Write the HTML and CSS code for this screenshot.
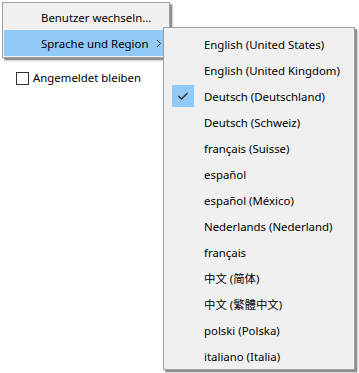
FILE: index.html
```html
<!DOCTYPE html>
<html lang="de">
<head>
<meta charset="utf-8">
<link rel="stylesheet" href="styles.css">
</head>
<body>
<div class="page">
  <label class="stay">
    <span class="box"></span>
    <span class="stay-text">Angemeldet bleiben</span>
  </label>
</div>

<div class="menu main-menu">
  <div class="item"><span class="label">Benutzer wechseln...</span></div>
  <div class="item active"><span class="label">Sprache und Region</span>
    <svg class="chev" width="6" height="9" viewBox="0 0 6 9"><path d="M1 1 L4.5 4.5 L1 8" fill="none" stroke="#333" stroke-width="1"/></svg>
  </div>
</div>

<div class="menu sub-menu">
  <div class="item"><span class="label">English (United States)</span></div>
  <div class="item"><span class="label">English (United Kingdom)</span></div>
  <div class="item"><span class="check"><svg width="12" height="10" viewBox="0 0 12 10"><path d="M1.5 5 L4.5 8 L10.5 2" fill="none" stroke="#2b2b2b" stroke-width="1.3"/></svg></span><span class="label">Deutsch (Deutschland)</span></div>
  <div class="item"><span class="label">Deutsch (Schweiz)</span></div>
  <div class="item"><span class="label">français (Suisse)</span></div>
  <div class="item"><span class="label">español</span></div>
  <div class="item"><span class="label">español (México)</span></div>
  <div class="item"><span class="label">Nederlands (Nederland)</span></div>
  <div class="item"><span class="label">français</span></div>
  <div class="item"><span class="label">中文 (简体)</span></div>
  <div class="item"><span class="label">中文 (繁體中文)</span></div>
  <div class="item"><span class="label">polski (Polska)</span></div>
  <div class="item"><span class="label">italiano (Italia)</span></div>
</div>
</body>
</html>
```
FILE: styles.css
```css
html, body {
  margin: 0;
  padding: 0;
  background: #ffffff;
  width: 359px;
  height: 373px;
  overflow: hidden;
  font-family: "Noto Sans", "Noto Sans CJK SC", sans-serif;
  font-size: 11.4px;
  color: #000;
}

.page {
  padding: 71px 0 0 16px;
}

.stay {
  display: flex;
  align-items: center;
  gap: 4px;
  height: 14px;
}

.box {
  width: 11px;
  height: 11px;
  border: 1px solid #333;
  background: #fff;
}

.stay-text {
  line-height: 14px;
}

.menu {
  position: absolute;
  background: #f0f0f0;
  border: 1px solid #a0a0a0;
  box-shadow: 2px 2px 1px rgba(0,0,0,0.35), 3px 3px 2px rgba(0,0,0,0.15);
  box-sizing: border-box;
}

.main-menu {
  left: 2px;
  top: 2px;
  width: 168px;
  height: 56px;
  padding: 1px 1px;
}

.sub-menu {
  left: 163px;
  top: 27px;
  width: 192px;
  height: 343px;
  padding: 3px 2px 0 2px;
}

.item {
  position: relative;
  height: 26px;
  display: flex;
  align-items: center;
}

.main-menu .item .label {
  padding-left: 37px;
}

.main-menu .item.active {
  background: #91c9f7;
}

.chev {
  position: absolute;
  left: 152px;
  top: 9px;
}

.sub-menu .item .label {
  padding-left: 38px;
}

.check {
  position: absolute;
  left: 6px;
  top: 2px;
  width: 22px;
  height: 22px;
  background: #91c9f7;
  display: flex;
  align-items: center;
  justify-content: center;
}
```
